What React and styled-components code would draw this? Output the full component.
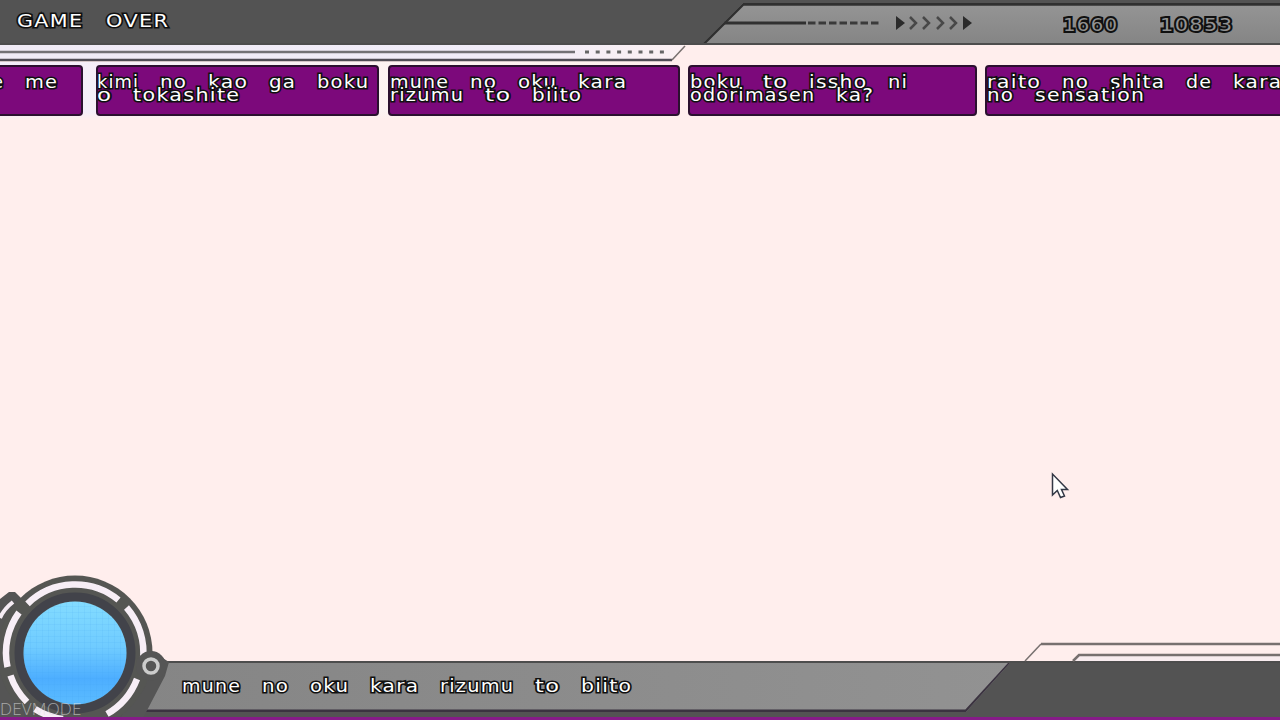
import React from "react";
import styled, { createGlobalStyle, css } from "styled-components";

const FONT = '"DejaVu Sans", Verdana, sans-serif';

const LETTER_SPACING = 1.2;

const GlobalStyle = createGlobalStyle`
  * {
    box-sizing: border-box;
  }

  body {
    margin: 0;
    background: #ffeeed;
    font-family: ${FONT};
    overflow: hidden;
  }
`;

const CARDS = [
  { width: 87, after: 13, shift: -6, lines: [[["e", 11], ["me", 32]]] },
  {
    width: 283,
    after: 9,
    shift: -1,
    lines: [
      [["kimi", 41], ["no", 26], ["kao", 39], ["ga", 26], ["boku", 51]],
      [["o", 14], ["tokashite", 106]]
    ]
  },
  {
    width: 292,
    after: 8,
    lines: [
      [["mune", 58], ["no", 26], ["oku", 38], ["kara", 48]],
      [["rizumu", 73], ["to", 25], ["biito", 49]]
    ]
  },
  {
    width: 289,
    after: 8,
    lines: [
      [["boku", 51], ["to", 24], ["issho", 57], ["ni", 19]],
      [["odorimasen", 124], ["ka?", 37]]
    ]
  },
  {
    width: 310,
    lines: [
      [["raito", 53], ["no", 26], ["shita", 54], ["de", 25], ["kara", 48]],
      [["no", 26], ["sensation", 109]]
    ]
  }
];

const CURRENT_LINE = [
  ["mune", 58],
  ["no", 26],
  ["oku", 38],
  ["kara", 48],
  ["rizumu", 73],
  ["to", 24],
  ["biito", 50]
];

const context = document.createElement("canvas").getContext("2d");

const stretch = (text, width, size) => {
  context.font = `${size}px ${FONT}`;
  const natural =
    context.measureText(text).width + (text.length - 1) * LETTER_SPACING;
  return width / natural;
};

const Screen = styled.main`
  position: relative;
  display: flex;
  flex-direction: column;
  width: 1280px;
  height: 720px;
  overflow: hidden;
  background: #ffeeed;
`;

const outlined = css`
  color: ${props => props.$color || "#fff"};
  -webkit-text-stroke: ${props => props.$stroke || 3.2}px #101010;
  paint-order: stroke fill;
  white-space: nowrap;
`;

const TextLine = styled.div`
  display: flex;
  gap: ${props => props.$gap || 22}px;
  height: ${props => props.$height || 13}px;
  line-height: ${props => props.$height || 13}px;
`;

const WordBox = styled.span`
  flex: none;
  width: ${props => props.$width}px;
  font-size: ${props => props.$size}px;
`;

const WordText = styled.span`
  ${outlined};
  display: inline-block;
  letter-spacing: ${LETTER_SPACING}px;
  transform-origin: 0 50%;
`;

const Word = ({ text, width, size = 18.5, color, stroke }) => (
  <WordBox $width={width} $size={size}>
    <WordText
      $color={color}
      $stroke={stroke}
      style={{ transform: `scaleX(${stretch(text, width, size)})` }}
    >
      {text}
    </WordText>
  </WordBox>
);

const Header = styled.header`
  display: flex;
  justify-content: space-between;
  height: 45px;
  background: #535353;
  border-bottom: 2px solid #4d4d4d;
`;

const Title = styled.div`
  padding: 11px 0 0 17px;
`;

const ScorePanel = styled.div`
  position: relative;
  display: flex;
  align-items: center;
  width: 577px;
  margin-top: 3px;
  background: linear-gradient(#959595, #858585);
  clip-path: polygon(40px 0, 100% 0, 100% 100%, 0 100%);
`;

const PanelTrim = styled.svg`
  position: absolute;
  inset: 0;
`;

const Scores = styled.div`
  display: flex;
  gap: 43px;
  margin-left: 360px;
  padding-top: 2px;
`;

const HeaderRule = styled.svg`
  display: block;
  flex: none;
  height: 17px;
`;

const Track = styled.section`
  display: flex;
  width: 1300px;
  height: 58px;
  margin-left: -4px;
  padding-top: 3px;
  background: linear-gradient(#ffeeed00 50px, #ffeeed),
    linear-gradient(90deg, #f3edfa, #fdf3f1 420px, #ffeeed 700px);
`;

const Card = styled.article`
  flex: none;
  width: ${props => props.$width}px;
  height: 51px;
  margin-right: ${props => props.$after || 0}px;
  padding-top: 8px;
  background: #7c097b;
  border: 2px solid #2b102f;
  border-radius: 4px;
  overflow: hidden;
`;

const CardText = styled.div`
  margin-left: ${props => props.$shift || 0}px;
`;

const Footer = styled.footer`
  display: flex;
  flex-direction: column;
  height: 59px;
  margin-top: auto;
  background: #535353;
  border-top: 2px solid #4d4d4d;
  border-bottom: 3px solid #861b88;
`;

const LyricPanel = styled.div`
  position: relative;
  width: 880px;
  height: 49px;
  margin-left: 130px;
  padding: 13px 0 0 52px;
  background: linear-gradient(90deg, #858585, #929292);
  clip-path: polygon(0 0, 100% 0, 836px 100%, 0 100%);
`;

const FooterRule = styled.svg`
  position: absolute;
  right: 0;
  bottom: 57px;
`;

const Orb = styled.svg`
  position: absolute;
  left: 0;
  bottom: 3px;
`;

const DevMode = styled.div`
  position: absolute;
  left: 0;
  bottom: 0;
  color: rgba(225, 225, 225, 0.6);
  font: 300 17px/22px "Open Sans", "Noto Sans", sans-serif;
  letter-spacing: 0.2px;
`;

const Cursor = styled.svg`
  position: absolute;
  left: 1050px;
  top: 471px;
`;

const renderWords = words =>
  words.map(([text, width], i) => <Word key={i} text={text} width={width} />);

const ScoreTrim = () => (
  <PanelTrim width="577" height="40" fill="none">
    <path d="M0 41 40 1H577" stroke="#303030" strokeWidth="3.5" />
    <path d="M21 20H103" stroke="#303030" strokeWidth="3" />
    <path d="M105 20H176" stroke="#3a3a3a" strokeWidth="3" strokeDasharray="7.500 3" />
    <g fill="#2b2b2b">
      <path d="M193 13 202 20 193 27Z" />
      <path d="M260 13 269 20 260 27Z" />
    </g>
    <path
      d="M207 14 213 20 207 26M220 14 226 20 220 26M234 14 240 20 234 26M247 14 253 20 247 26"
      stroke="#484848"
      strokeWidth="2.500"
    />
  </PanelTrim>
);

const OrbGauge = () => (
  <Orb width="180" height="147" viewBox="0 570 180 147">
    <defs>
      <linearGradient id="glass" x1="0" y1="0" x2="0" y2="1">
        <stop offset="0" stopColor="#83dcff" />
        <stop offset="0.45" stopColor="#6fcbff" />
        <stop offset="0.75" stopColor="#4daeff" />
        <stop offset="1" stopColor="#5bbcff" />
      </linearGradient>
      <pattern id="mesh" width="6" height="6" patternUnits="userSpaceOnUse">
        <path d="M0 0H6M0 0V6" stroke="#3c9fec" strokeOpacity="0.2" />
      </pattern>
    </defs>
    <path d="M0 599 9 592H15L24 601V720H0Z" fill="#555" />
    <path d="M0 618Q4 609 13 602" stroke="#f5ecf4" strokeWidth="4" fill="none" />
    <path d="M120 720 165 676 169 662 150 650ZM120 720H142L165 676Z" fill="#555" />
    <circle cx="75" cy="653" r="77.5" fill="#555653" />
    <circle cx="75" cy="653" r="56" fill="none" stroke="#42434a" strokeWidth="9" />
    <g fill="none" stroke="#f7eef6" strokeWidth="6.500">
      <path d="M27.500 603.800A68.500 68.500 0 0 1 118.500 600" />
      <path d="M126.500 607.500A68.500 68.500 0 0 1 143 660" />
      <path d="M19 612.500A68.500 68.500 0 0 0 7.500 667" />
      <path d="M10.500 675.500A68.500 68.500 0 0 0 27 702" />
      <path d="M137 679A68.500 68.500 0 0 1 107 714" />
      <path d="M35 709A68.500 68.500 0 0 0 63 719" />
    </g>
    <circle cx="151" cy="666" r="15" fill="#555" />
    <circle cx="151" cy="666" r="7" fill="#555" stroke="#ccc" strokeWidth="3.500" />
    <circle cx="75" cy="653" r="51.500" fill="url(#glass)" />
    <circle cx="75" cy="653" r="51.500" fill="url(#mesh)" />
  </Orb>
);

export default function App() {
  return (
    <>
      <GlobalStyle />
      <Screen>
        <Header>
          <Title>
            <TextLine $gap={24} $height={20}>
              <Word text="GAME" width={65} />
              <Word text="OVER" width={62} />
            </TextLine>
          </Title>
          <ScorePanel>
            <ScoreTrim />
            <Scores>
              <Word text="1660" width={54} color="#929292" stroke={3.8} />
              <Word text="10853" width={72} color="#929292" stroke={3.8} />
            </Scores>
          </ScorePanel>
        </Header>

        <HeaderRule width="1280" height="17" viewBox="0 45 1280 17" fill="none">
          <defs>
            <linearGradient id="sheen">
              <stop offset="0" stopColor="#f0ebf6" />
              <stop offset="0.75" stopColor="#f1ecf8" />
              <stop offset="1" stopColor="#fbf0f2" />
            </linearGradient>
          </defs>
          <path d="M0 45H684L672 60H0Z" fill="url(#sheen)" />
          <path d="M0 52H575" stroke="#737175" strokeWidth="2.500" />
          <path d="M585 52H665" stroke="#666" strokeWidth="3" strokeDasharray="4 6.700" />
          <path d="M0 60H672" stroke="#504c55" strokeWidth="2.500" />
          <path d="M672 60 685 46" stroke="#77706f" strokeWidth="1.500" />
        </HeaderRule>

        <Track>
          {CARDS.map((card, i) => (
            <Card key={i} $width={card.width} $after={card.after}>
              <CardText $shift={card.shift}>
                {card.lines.map((line, j) => (
                  <TextLine key={j}>{renderWords(line)}</TextLine>
                ))}
              </CardText>
            </Card>
          ))}
        </Track>

        <Footer>
          <LyricPanel>
            <PanelTrim width="880" height="49" fill="none">
              <path d="M10 48H836L880 0" stroke="#3b3340" strokeWidth="3" />
            </PanelTrim>
            <TextLine $height={20}>{renderWords(CURRENT_LINE)}</TextLine>
          </LyricPanel>
        </Footer>

        <FooterRule width="260" height="22" viewBox="1020 641 260 22" fill="none">
          <path d="M1073 661 1079 655H1280V661Z" fill="#f8ecef" />
          <path d="M1025 661 1041 644" stroke="#77706f" strokeWidth="1.500" />
          <path d="M1041 644H1280" stroke="#77706f" strokeWidth="2.500" />
          <path d="M1073 661 1079 655H1280" stroke="#77706f" strokeWidth="2.500" />
        </FooterRule>
        <OrbGauge />
        <DevMode>DEVMODE</DevMode>
        <Cursor width="22" height="30" viewBox="0 0 22 30">
          <path
            d="M2.500 3V24L7.300 19.500 10.500 26.500 14.500 25 11.500 18.500H17.500Z"
            fill="#fff"
            stroke="#333745"
            strokeWidth="1.500"
          />
        </Cursor>
      </Screen>
    </>
  );
}
